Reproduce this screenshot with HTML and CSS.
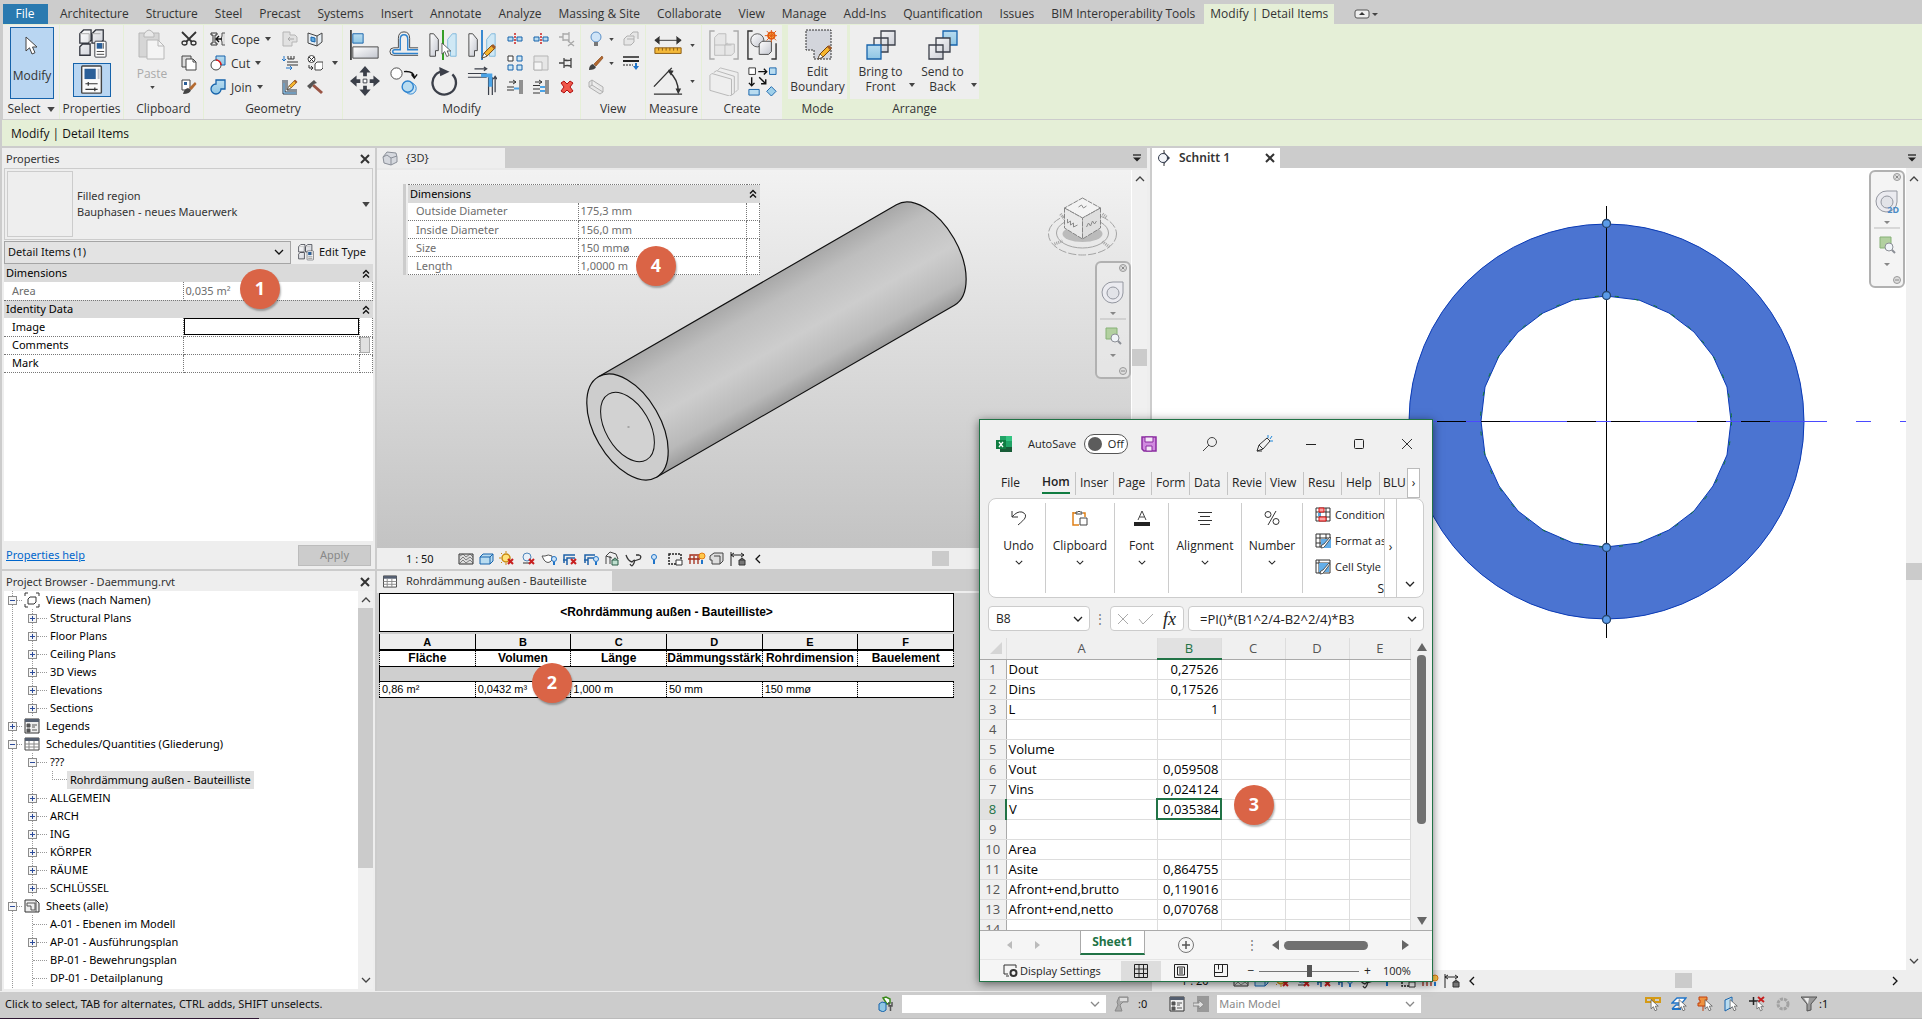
FILE: index.html
```html
<!DOCTYPE html>
<html lang="en">
<head>
<meta charset="utf-8">
<title>Modify | Detail Items</title>
<link rel="stylesheet" href="styles.css">
</head>
<body>
<svg class="defs" aria-hidden="true">
  <defs>
    <linearGradient id="steel" x1="0" y1="0" x2="1" y2="1"><stop offset="0" stop-color="#fff"/><stop offset="1" stop-color="#c3c6cf"/></linearGradient>
    <linearGradient id="sky" x1="0" y1="0" x2="0" y2="1"><stop offset="0" stop-color="#b9dcf0"/><stop offset="1" stop-color="#8fc6e4"/></linearGradient>
    <linearGradient id="pipe" x1="0" y1="0" x2="0" y2="1"><stop offset="0" stop-color="#a8a8a8"/><stop offset=".2" stop-color="#bebebe"/><stop offset=".55" stop-color="#cdcdcd"/><stop offset=".85" stop-color="#b9b9b9"/><stop offset="1" stop-color="#9c9c9c"/></linearGradient>
  </defs>
  <symbol id="caret" viewBox="0 0 6 4"><path d="M0 0h6L3 4z" fill="#444"/></symbol>
  <symbol id="chev" viewBox="0 0 10 6"><path d="M1 1l4 4 4-4" fill="none" stroke="currentColor" stroke-width="1.3"/></symbol>
  <symbol id="close" viewBox="0 0 10 10"><path d="M1 1l8 8M9 1l-8 8" stroke="#333" stroke-width="2"/></symbol>
  <symbol id="dbl" viewBox="0 0 8 8"><path d="M1 4l3-3 3 3M1 8l3-3 3 3" fill="none" stroke="#111" stroke-width="1.4"/></symbol>
  <symbol id="pencil" viewBox="0 0 16 16"><path d="M1 15l2-5L11 2l3 3-8 8z" fill="#f5b52e" stroke="#7a4308"/><path d="M1 15l2-5 3 3z" fill="#fff" stroke="#333" stroke-width=".6"/><path d="M10 3l2-2 3 3-2 2z" fill="#a05a28"/></symbol>
  <symbol id="arrow" viewBox="0 0 14 20"><path d="M1 1v14l3.500-3.200L7 18l3-1.300L7.500 11H12z" fill="#fff" stroke="#444"/></symbol>
  <symbol id="palette" viewBox="0 0 32 32"><path d="M3 5l4-4h8v11l-3 3H3zM16 5l4-4h8v11l-3 3h-9zM3 19l3-3h8v12H3z" fill="url(#steel)" stroke="#33363f" stroke-width="1.400"/><path d="M3 5h10v10M16 5h9" fill="none" stroke="#aaa"/><rect x="19" y="13" width="12" height="17" rx="1" fill="#fff" stroke="#33363f"/><path d="M21 15h6v6h-6z" fill="#2b5f98"/><path d="M21 24h8M21 27h8M28 15v6" stroke="#444"/></symbol>
  <symbol id="props" viewBox="0 0 24 32"><rect x="1" y="1" width="21" height="29" rx="1" fill="#fafafa" stroke="#444" stroke-width="1.500"/><path d="M4 4h12v11H4z" fill="#2b5f98"/><path d="M18 4h2v11h-2z" fill="#b9bcc4"/><path d="M5 20h13M8 18v4M5 26h13M15 24v4" stroke="#333" stroke-width="1.300"/></symbol>
  <symbol id="paste" viewBox="0 0 28 32"><path d="M1 4h20v24H1z" fill="#d6d6d6" stroke="#b8b8b8"/><path d="M6 5q5-8 10 0v3H6z" fill="#e9e9e9" stroke="#b8b8b8"/><path d="M9 11h11l6 6v13H9z" fill="#f4f4f4" stroke="#b8b8b8"/><path d="M20 11v6h6" fill="none" stroke="#b8b8b8"/></symbol>
  <symbol id="scissors" viewBox="0 0 16 16"><path d="M1 1l10 10M15 1L5 11" stroke="#333" stroke-width="1.800"/><ellipse cx="3.500" cy="12" rx="2.500" ry="2" fill="none" stroke="#333" stroke-width="1.300"/><ellipse cx="12.500" cy="12" rx="2.500" ry="2" fill="none" stroke="#333" stroke-width="1.300"/></symbol>
  <symbol id="copy" viewBox="0 0 16 16"><path d="M1 1h9v11H1z" fill="#ddd" stroke="#444"/><path d="M5 4h7l3 3v8H5z" fill="#fff" stroke="#444"/><path d="M12 4v3h3" fill="none" stroke="#444"/></symbol>
  <symbol id="match" viewBox="0 0 16 16"><path d="M1 1h8v10H1z" fill="#fff" stroke="#444"/><path d="M3 3h3v3H3z" fill="#2b5f98"/><path d="M2 15q1-5 5-6l3 2q-1 4-8 4z" fill="#444"/><path d="M8 9l6-6 1.500 2-5 6z" fill="#b46a30"/></symbol>
  <symbol id="cope" viewBox="0 0 16 16"><path d="M1 2h6v2H5v8h2v2H1v-2h2V4H1z" fill="#eee" stroke="#333"/><path d="M15 2h-3v3q-2 3 0 6v3h3" fill="#ddd" stroke="#555"/><path d="M12 8H6M9 5L6 8l3 3" fill="none" stroke="#111" stroke-width="1.400"/></symbol>
  <symbol id="cut" viewBox="0 0 16 16"><path d="M6 1h9v9H6z" fill="url(#sky)" stroke="#1663ab"/><circle cx="6" cy="10" r="5" fill="#fff" stroke="#444"/><path d="M6 5a5 5 0 015 5" fill="none" stroke="#e21b1b" stroke-width="1.500"/></symbol>
  <symbol id="join" viewBox="0 0 16 16"><path d="M6 1h9v9h-4a5 5 0 11-5-5z" fill="url(#sky)" stroke="#1663ab" stroke-width="1.300"/></symbol>
  <symbol id="conn" viewBox="0 0 16 16"><path d="M1 1h7v3h5l2 2v5h-5v4H1z" fill="#e1e1e1" stroke="#b5b5b5"/><path d="M12 8H6M8 6L6 8l2 2" stroke="#aaa" fill="none"/></symbol>
  <symbol id="wallj" viewBox="0 0 16 16"><path d="M2 1v5M0 4l2 2 2-2M4 13h6M8 11l2 2-2 2" fill="none" stroke="#1f74c8"/><path d="M6 1v3h6V1M9 1v3M5 7h11M5 10h11" fill="none" stroke="#333"/></symbol>
  <symbol id="wallpen" viewBox="0 0 16 16"><path d="M1 1v14h14M5 1v10h10M3 1v12h12" fill="none" stroke="#234" /><path d="M2 4v10h12" fill="none" stroke="#5aa7e0"/><use href="#pencil" x="5" y="0" width="11" height="11"/></symbol>
  <symbol id="facep" viewBox="0 0 16 16"><path d="M1 2l9 3v10l-9-3zM10 5l5-3v9l-5 4" fill="#e6edf3" stroke="#444"/><path d="M4 6l4 1v4l-4-1z" fill="#64aee0" stroke="#1663ab"/></symbol>
  <symbol id="split" viewBox="0 0 16 16"><circle cx="4.500" cy="4" r="3.500" fill="#fff" stroke="#444"/><path d="M2 2l5 5M7 2L2 7M2 10v3h4M4 11l2 2-2 2" fill="none" stroke="#333"/><path d="M8 9l2-2h6v6l-2 2H8z" fill="#fff" stroke="#444"/></symbol>
  <symbol id="hammer" viewBox="0 0 16 16"><path d="M6 6l9 8" stroke="#9a5545" stroke-width="3"/><path d="M0 7l7-6 3 3-3 1-4 5z" fill="#555"/></symbol>
  <symbol id="align" viewBox="0 0 32 32"><path d="M1 0v32" stroke="#111" stroke-width="1.500"/><path d="M3 4h11v10H3z" fill="url(#sky)" stroke="#1663ab"/><path d="M3 18h27v12H3z" fill="url(#steel)" stroke="#444"/></symbol>
  <symbol id="offset" viewBox="0 0 32 32"><path d="M31 27H5q-4 0-4-4t4-4h5V9q0-7 6-7t6 7v10h9" fill="none" stroke="#444"/><path d="M31 25H6q-2 0-2-2t2-2h6V10q0-5 4-5t4 5v11h11" fill="none" stroke="#2d83cf" stroke-width="1.500"/></symbol>
  <symbol id="mirror" viewBox="0 0 32 32"><path d="M2 4h4l5 6v12H8v6H2z" fill="url(#steel)" stroke="#444"/><path d="M30 4h-4l-5 6v12h3v6h6z" fill="#cfe8f5" stroke="#7fb9dc"/></symbol>
  <symbol id="move" viewBox="0 0 32 32"><path d="M16 0l6 7h-4v4h-4V7h-4zM16 32l6-7h-4v-4h-4v4h-4zM0 16l7-6v4h4v4H7v4zM32 16l-7-6v4h-4v4h4v4z" fill="#3b3f49"/><path d="M14 14h4v4h-4z" fill="#fff" stroke="#3b3f49"/></symbol>
  <symbol id="copy3" viewBox="0 0 32 32"><circle cx="8" cy="8" r="6" fill="#fff" stroke="#444"/><path d="M16 6q10-1 11 6M24 9l3 4 3-4" fill="none" stroke="#111" stroke-width="1.500"/><circle cx="23" cy="24" r="6" fill="#cde6f5" stroke="#2d83cf"/><circle cx="20" cy="22" r="6" fill="#b9dcf0" stroke="#2d83cf" stroke-width="1.500"/></symbol>
  <symbol id="rotate" viewBox="0 0 32 32"><path d="M18 5.500A12.500 12.500 0 1026 9" fill="none" stroke="#3b3f49" stroke-width="2.500"/><path d="M12 1l11 5-10 5z" fill="#3b3f49"/></symbol>
  <symbol id="trim" viewBox="0 0 32 32"><path d="M8 3h13M18 1l3 2-3 2M1 8h20M1 12h20M23 31V12M27 31V12M30 28V11M28 14l2-3 2 3" fill="none" stroke="#3b3f49" stroke-width="1.300"/><path d="M15 10h10v12" fill="none" stroke="#4ba3e6" stroke-width="4"/></symbol>
  <symbol id="spl" viewBox="0 0 16 16"><path d="M1 6h5v4H1zM10 6h5v4h-5z" fill="#b9dcf0" stroke="#1663ab"/><path d="M8 2v12" stroke="#c22" stroke-width="1.500" stroke-dasharray="2 1"/></symbol>
  <symbol id="unpin" viewBox="0 0 16 16"><path d="M0 6h4M4 2v8M4 3h6v6H4M10 1v10M9 10l6 5M15 10l-6 5" fill="none" stroke="#aaa" stroke-width="1.300"/></symbol>
  <symbol id="array" viewBox="0 0 16 16"><path d="M1 1h5v5H1z" fill="#fff" stroke="#333"/><path d="M10 1h5v5h-5zM1 10h5v5H1zM10 10h5v5h-5z" fill="#cfe8f5" stroke="#1663ab"/></symbol>
  <symbol id="scale" viewBox="0 0 16 16"><path d="M1 1h14v14H1z" fill="#e6e6e6" stroke="#b5b5b5"/><path d="M1 7h8v8H1z" fill="#f5f5f5" stroke="#b5b5b5"/></symbol>
  <symbol id="pin" viewBox="0 0 16 16"><path d="M0 8h5M5 3v10M5 5q4 1 7 0v6q-4-1-7 0M12 3v10" fill="#eee" stroke="#444" stroke-width="1.300"/></symbol>
  <symbol id="ext" viewBox="0 0 16 16"><path d="M2 3h7M6 1l3 2-3 2M0 8h7M0 11h7M13 1v14M15 1v14" fill="none" stroke="#333"/><path d="M7 9.500h5" stroke="#4ba3e6" stroke-width="2"/></symbol>
  <symbol id="ext2" viewBox="0 0 16 16"><path d="M2 3h7M6 1l3 2-3 2M0 6.500h7M0 10h7M0 14h7M13 1v14M15 1v14" fill="none" stroke="#333"/><path d="M7 8h5M7 12h5" stroke="#4ba3e6" stroke-width="2"/></symbol>
  <symbol id="del" viewBox="0 0 16 16"><path d="M2 4l3-2 3 3 3-3 3 2-3 4 3 4-3 2-3-3-3 3-3-2 3-4z" fill="#f0564a" stroke="#b01010"/></symbol>
  <symbol id="bulb" viewBox="0 0 16 16"><circle cx="8" cy="6" r="5" fill="#cfe4f7" stroke="#5b90c8"/><path d="M6 11h4v4H6z" fill="#777"/></symbol>
  <symbol id="gbox" viewBox="0 0 16 16"><path d="M1 8l3-3h7v6l-3 3H1zM4 8h7M7 4l3-3h5v7" fill="#e6e6e6" stroke="#b0b0b0"/></symbol>
  <symbol id="brush" viewBox="0 0 16 16"><path d="M1 15q0-5 4-6l3 3q-1 3-7 3z" fill="#444"/><path d="M6 9l8-8 1 2-7 8z" fill="#b46a30" stroke="#8a4a1c" stroke-width=".7"/></symbol>
  <symbol id="lw" viewBox="0 0 16 16"><path d="M0 2h16" stroke="#222" stroke-width="1.500"/><path d="M0 6h16" stroke="#222" stroke-width="2"/><path d="M0 10h10" stroke="#222" stroke-dasharray="2 1"/><path d="M12 8h2v3h2l-3 4-3-4h2z" fill="#1f74c8"/></symbol>
  <symbol id="beam" viewBox="0 0 16 16"><path d="M1 3l3-2 11 7v5l-3 2-11-7zM4 1v5l11 7M1 8l3-2" fill="#e6e6e6" stroke="#b0b0b0"/></symbol>
  <symbol id="ruler" viewBox="0 0 32 32"><path d="M2 11h28M7 7l-5 4 5 4M25 7l5 4-5 4" fill="#333" stroke="#333"/><path d="M2 19h28v6H2z" fill="#f4b93a" stroke="#8a5a10"/><path d="M6 19v3M10 19v3M14 19v3M18 19v3M22 19v3M26 19v3" stroke="#8a5a10"/></symbol>
  <symbol id="angle" viewBox="0 0 32 32"><path d="M1 30h30M1 22L20 2M17 6q10 8 10 22" fill="none" stroke="#333" stroke-width="1.500"/><path d="M16 4l6 1-3 5zM24 24h6l-3 6z" fill="#333"/></symbol>
  <symbol id="grp" viewBox="0 0 32 32"><path d="M6 1H1v30h5M26 1h5v30h-5" fill="none" stroke="#aaa" stroke-width="1.500"/><path d="M6 8l4-4h8v11h9v9l-3 3H6zM6 16h11v11M17 16l3-2M17 16h7" fill="#e6e6e6" stroke="#bbb"/></symbol>
  <symbol id="grpn" viewBox="0 0 32 32"><path d="M6 1H1v30h5M26 31h5V14" fill="none" stroke="#333" stroke-width="1.500"/><circle cx="11" cy="11" r="7" fill="url(#steel)" stroke="#555"/><path d="M13 15l3-3h10v11l-3 3H13z" fill="url(#steel)" stroke="#444"/><circle cx="26" cy="6" r="3.500" fill="#ffd65a" stroke="#e25a12" stroke-width="2"/><path d="M26-1v14M19 6h14M21 1l10 10M31 1L21 11" stroke="#e25a12"/></symbol>
  <symbol id="asm" viewBox="0 0 32 32"><path d="M9 5l3-3 19 5v18l-3 3" fill="#eee" stroke="#bbb"/><path d="M5 7l3-2 19 6v18l-3 2M1 10l2-2 21 6v17l-2 1L1 26z" fill="#eee" stroke="#b5b5b5"/></symbol>
  <symbol id="similar" viewBox="0 0 32 32"><path d="M2 2h7v7H2z" fill="#fff" stroke="#333"/><path d="M24 2h7v7h-7zM2 25h11v6H2z" fill="#b9dcf0" stroke="#1663ab"/><path d="M26 22l5 5-5 5-5-5z" fill="#9fd0ea" stroke="#1663ab"/><path d="M12 6h9M18 3l3 3-3 3M5 12v9M2 18l3 3 3-3M13 12l7 7M20 14v5h-5" fill="none" stroke="#111" stroke-width="1.500"/></symbol>
  <symbol id="bound" viewBox="0 0 32 32"><path d="M4 1h25v29H12v-9H4z" fill="#d3d5dc" stroke="#333" stroke-dasharray="2 1"/><use href="#pencil" x="15" y="15" width="16" height="16"/></symbol>
  <symbol id="front" viewBox="0 0 32 32"><path d="M16 2h14v14H16zM9 9h14v14H9z" fill="url(#steel)" stroke="#3b3f49" stroke-width="1.300"/><path d="M2 16h14v14H2z" fill="url(#sky)" stroke="#1663ab" stroke-width="1.300"/></symbol>
  <symbol id="back" viewBox="0 0 32 32"><path d="M16 2h14v14H16z" fill="url(#sky)" stroke="#1663ab" stroke-width="1.300"/><path d="M9 9h14v14H9zM2 16h14v14H2z" fill="url(#steel)" stroke="#3b3f49" stroke-width="1.300"/></symbol>
  <symbol id="sched" viewBox="0 0 16 14"><path d="M1 1h14v12H1z" fill="#fff" stroke="#444"/><path d="M1 1h14v3H1z" fill="#555f70"/><path d="M1 7h14M1 10h14M5 4v9M10 4v9" stroke="#888"/></symbol>
  <symbol id="viewset" viewBox="0 0 16 16"><path d="M4 1H1v3M12 1h3v3M1 12v3h3M15 12v3h-3M4 7l2-2h6v5l-2 2H4z" fill="none" stroke="#333"/></symbol>
  <symbol id="legend" viewBox="0 0 16 16"><path d="M1 1h14v14H1z" fill="#eee" stroke="#333"/><path d="M1 1h14v3H1z" fill="#555f70"/><path d="M3 6h3v3H3zM3 11h3v3H3zM8 7h5M8 9h3M8 12h5" fill="#555" stroke="#555"/></symbol>
  <symbol id="sheet" viewBox="0 0 16 14"><path d="M1 1h11l3 3v9H1z" fill="#eee" stroke="#333"/><path d="M3 4h8v7H7V7H3zM12 1v12" fill="none" stroke="#555"/></symbol>
  <symbol id="house" viewBox="0 0 16 16"><path d="M1 7l4-5 9 1 1 4v5l-6 3-7-2z" fill="#d5d8de" stroke="#8a8f98"/><path d="M1 7l4-2 4 3v7M9 8l6-2" fill="none" stroke="#8a8f98"/></symbol>
  <symbol id="plus" viewBox="0 0 9 9"><rect x=".5" y=".5" width="8" height="8" fill="#f6f6f6" stroke="#8c8c8c"/><path d="M2 4.500h5M4.500 2v5" stroke="#2b4b9b"/></symbol>
  <symbol id="minus" viewBox="0 0 9 9"><rect x=".5" y=".5" width="8" height="8" fill="#f6f6f6" stroke="#8c8c8c"/><path d="M2 4.500h5" stroke="#2b4b9b"/></symbol>
  <symbol id="tabmenu" viewBox="0 0 8 8"><path d="M0 1h8" stroke="#222" stroke-width="1.300"/><path d="M0 3.500h8L4 7.500z" fill="#222"/></symbol>
  <symbol id="vcbar" viewBox="0 0 290 16">
    <path d="M1 3h14v10H1z" fill="#ddd" stroke="#333"/><path d="M2 5l3-2 3 3 4-3 3 3M2 9l3-3 3 3 4-3 3 3M2 12l3-3 3 3 4-3 3 3" fill="none" stroke="#555" stroke-width=".7"/>
    <path d="M22 6l3-3h10v7l-3 3H22zM22 6h10v7M32 6l3-3" fill="#b9dcf0" stroke="#1663ab"/>
    <circle cx="48" cy="7" r="4" fill="#ffe27a" stroke="#c98a10" stroke-width="1.500"/><path d="M48 0v2M48 12v2M41 7h2M43 2l1 1M43 12l1-1" stroke="#c98a10"/><path d="M50 8l5 5M55 8l-5 5" stroke="#c71f1f" stroke-width="2"/>
    <circle cx="69" cy="6" r="4" fill="#e8f0f8" stroke="#4f86bb"/><path d="M65 12h7" stroke="#333"/><path d="M71 8l5 5M76 8l-5 5" stroke="#c71f1f" stroke-width="2"/>
    <path d="M84 5l2 4q4 5 8 0V5q-4-2-7 0z" fill="#fff" stroke="#555"/><circle cx="96" cy="8" r="2.500" fill="#cfe4f7" stroke="#1f74c8"/><path d="M96 11v3" stroke="#1f74c8" stroke-width="2"/>
    <path d="M106 12V4h11M109 14V7h8M105 9h4" fill="none" stroke="#1f62a8" stroke-width="1.500"/><path d="M113 8l5 5M118 8l-5 5" stroke="#c71f1f" stroke-width="2"/>
    <path d="M127 12V4h10M130 14V7h6M126 9h4" fill="none" stroke="#1f62a8" stroke-width="1.500"/><circle cx="138" cy="8" r="2.500" fill="#cfe4f7" stroke="#1f74c8"/><path d="M138 11v3" stroke="#1f74c8" stroke-width="2"/>
    <path d="M148 13V5l4-4 6 2 2 5M152 5v8M148 5l6 2" fill="#eee" stroke="#444"/><path d="M154 9h6v5h-6zM155 9q2-4 4 0" fill="#bfe0d0" stroke="#2a5c46"/>
    <path d="M168 4q2 6 6 7M174 11q4-4 2 1t-4 1M176 10l6-2q2-3-1-4l-3 0" fill="none" stroke="#333" stroke-width="1.300"/>
    <circle cx="196" cy="6" r="2.500" fill="#cfe4f7" stroke="#1f74c8"/><path d="M196 9v4" stroke="#1f74c8" stroke-width="2"/>
    <path d="M211 3h12v10h-12z" fill="none" stroke="#222" stroke-width="1.500" stroke-dasharray="2 1"/><path d="M218 9h6v5h-6z" fill="#fff" stroke="#333"/>
    <path d="M232 13V4h11M236 13V5M240 13V5M230 8h12" fill="none" stroke="#a22c1a" stroke-width="1.300"/><circle cx="244" cy="5" r="3" fill="#ffc84a" stroke="#e27b12"/><path d="M244 9v4" stroke="#1f74c8" stroke-width="2"/>
    <path d="M252 5l4-3h9v8l-3 3h-8v-4h-2zM256 5h6v8" fill="#ddd" stroke="#444"/>
    <path d="M273 1v14M273 4h13M276 2l-3 2 3 2M283 2l3 2-3 2" fill="none" stroke="#222"/><path d="M281 9h6v5h-6zM282 9q2-4 4 0" fill="#777" stroke="#333"/>
  </symbol>
  <symbol id="nav" viewBox="0 0 36 118">
    <rect x="1" y="1" width="34" height="116" rx="5" fill="#ececec" fill-opacity=".6" stroke="#b1b1b1" stroke-width="2"/>
    <circle cx="28" cy="7" r="3.500" fill="#ddd" stroke="#999"/><path d="M26.500 5.500l3 3M29.500 5.500l-3 3" stroke="#888"/>
    <path d="M18 21h10v11a10.500 10.500 0 11-10-11z" fill="#ebebf0" stroke="#9497a0"/><circle cx="18" cy="32" r="6" fill="#e2e3e8" stroke="#9497a0"/>
    <path d="M15 51h6l-3 3zM15 93h6l-3 3z" fill="#888"/><path d="M5 58h26" stroke="#bbb"/>
    <path d="M11 67h11v11H11z" fill="#b2d0a0" stroke="#86b176"/><circle cx="20" cy="77" r="4" fill="#f0f4f8" stroke="#8c8f96"/><path d="M23 80l3 3" stroke="#8c8f96" stroke-width="2"/>
    <circle cx="28" cy="110" r="3.500" fill="#ddd" stroke="#999"/><path d="M26 110h4" stroke="#888"/>
  </symbol>
</svg>

<nav class="tabs" aria-label="Ribbon tabs">
  <button class="file">File</button>
  <button>Architecture</button><button>Structure</button><button>Steel</button><button>Precast</button><button>Systems</button><button>Insert</button><button>Annotate</button><button>Analyze</button><button>Massing &amp; Site</button><button>Collaborate</button><button>View</button><button>Manage</button><button>Add-Ins</button><button>Quantification</button><button>Issues</button><button>BIM Interoperability Tools</button>
  <button class="current">Modify | Detail Items</button>
  <button aria-label="Minimize ribbon"><svg width="24" height="10" viewBox="0 0 24 10"><rect x="1" y="1" width="14" height="8" rx="2" fill="#eee" stroke="#555"/><path d="M5 6h6L8 3z" fill="#333"/><path d="M18 4h6l-3 3z" fill="#444"/></svg></button>
</nav>

<header class="ribbon">
  <section class="panel p-select">
    <div class="tools"><button class="big on"><svg width="14" height="20"><use href="#arrow"/></svg><span>Modify</span></button></div>
    <h2>Select <svg width="8" height="5"><use href="#caret"/></svg></h2>
  </section>
  <section class="panel p-props">
    <div class="tools stack"><button aria-label="Type properties"><svg width="30" height="30"><use href="#palette"/></svg></button><button class="on" aria-label="Properties"><svg width="24" height="30"><use href="#props"/></svg></button></div>
    <h2>Properties</h2>
  </section>
  <section class="panel p-clip">
    <div class="tools">
      <button class="big off"><svg width="28" height="32"><use href="#paste"/></svg><span>Paste</span><svg width="5" height="3"><use href="#caret"/></svg></button>
      <div class="small one"><svg><use href="#scissors"/></svg><svg><use href="#copy"/></svg><svg><use href="#match"/></svg></div>
    </div>
    <h2>Clipboard</h2>
  </section>
  <section class="panel p-geo">
    <div class="tools">
      <div class="lines">
        <button><svg class="ic"><use href="#cope"/></svg>Cope <svg class="ct"><use href="#caret"/></svg></button>
        <button><svg class="ic"><use href="#cut"/></svg>Cut <svg class="ct"><use href="#caret"/></svg></button>
        <button><svg class="ic"><use href="#join"/></svg>Join <svg class="ct"><use href="#caret"/></svg></button>
      </div>
      <div class="small one"><svg><use href="#conn"/></svg><svg><use href="#wallj"/></svg><svg><use href="#wallpen"/></svg></div>
      <div class="small one"><svg><use href="#facep"/></svg><svg><use href="#split"/></svg><svg><use href="#hammer"/></svg></div>
      <svg class="ct"><use href="#caret"/></svg>
    </div>
    <h2>Geometry</h2>
  </section>
  <section class="panel p-mod">
    <div class="tools">
      <div class="large four">
        <svg><use href="#align"/></svg><svg><use href="#offset"/></svg>
        <svg viewBox="0 0 32 32"><use href="#mirror"/><path d="M16 0v32" stroke="#2a9a1a" stroke-width="2"/><use href="#arrow" x="13" y="13" width="14" height="17"/></svg>
        <svg viewBox="0 0 32 32"><use href="#mirror"/><path d="M16 0v32" stroke="#2d83cf" stroke-width="2"/><use href="#pencil" x="15" y="14" width="17" height="17"/></svg>
        <svg><use href="#move"/></svg><svg><use href="#copy3"/></svg><svg><use href="#rotate"/></svg><svg><use href="#trim"/></svg>
      </div>
      <div class="small three">
        <svg><use href="#spl"/></svg><svg><use href="#spl"/></svg><svg><use href="#unpin"/></svg>
        <svg><use href="#array"/></svg><svg><use href="#scale"/></svg><svg><use href="#pin"/></svg>
        <svg><use href="#ext"/></svg><svg><use href="#ext2"/></svg><svg><use href="#del"/></svg>
      </div>
    </div>
    <h2>Modify</h2>
  </section>
  <section class="panel p-view">
    <div class="tools">
      <div class="small drop"><svg><use href="#bulb"/></svg><svg class="ct"><use href="#caret"/></svg><svg><use href="#gbox"/></svg>
      <svg><use href="#brush"/></svg><svg class="ct"><use href="#caret"/></svg><svg><use href="#lw"/></svg>
      <svg><use href="#beam"/></svg></div>
    </div>
    <h2>View</h2>
  </section>
  <section class="panel p-meas">
    <div class="tools"><div class="large meas"><svg><use href="#ruler"/></svg><svg class="ct"><use href="#caret"/></svg><svg><use href="#angle"/></svg><svg class="ct"><use href="#caret"/></svg></div></div>
    <h2>Measure</h2>
  </section>
  <section class="panel p-create">
    <div class="tools"><div class="large two"><svg><use href="#grp"/></svg><svg><use href="#grpn"/></svg><svg><use href="#asm"/></svg><svg><use href="#similar"/></svg></div></div>
    <h2>Create</h2>
  </section>
  <section class="panel ctx p-mode">
    <div class="tools"><button class="big"><svg width="32" height="32"><use href="#bound"/></svg><span>Edit<br>Boundary</span></button></div>
    <h2>Mode</h2>
  </section>
  <section class="panel ctx p-arr">
    <div class="tools">
      <button class="big"><svg width="32" height="32"><use href="#front"/></svg><span>Bring to<br>Front</span></button><svg class="ct"><use href="#caret"/></svg>
      <button class="big"><svg width="32" height="32"><use href="#back"/></svg><span>Send to<br>Back</span></button><svg class="ct"><use href="#caret"/></svg>
    </div>
    <h2>Arrange</h2>
  </section>
</header>
<div class="options">Modify | Detail Items</div>

<main class="work">
  <aside class="side">
    <section class="dock props">
      <h3>Properties <button aria-label="Close properties"><svg width="10" height="10"><use href="#close"/></svg></button></h3>
      <button class="type"><i class="thumb"></i><span>Filled region<br>Bauphasen - neues Mauerwerk</span><svg width="8" height="5"><use href="#caret"/></svg></button>
      <div class="filter">
        <div class="pick"><select aria-label="Element filter"><option>Detail Items (1)</option></select><svg width="10" height="6"><use href="#chev"/></svg></div>
        <button><svg width="17" height="17" viewBox="0 0 32 32"><use href="#palette"/></svg>Edit Type</button>
      </div>
      <div class="grid">
        <table class="pg">
          <colgroup><col class="k"><col><col class="e"></colgroup>
          <tbody>
          <tr class="sec"><th colspan="2">Dimensions</th><th><svg width="8" height="9"><use href="#dbl"/></svg></th></tr>
          <tr class="ro"><td>Area</td><td>0,035 m²</td><td></td></tr>
          <tr class="sec"><th colspan="2">Identity Data</th><th><svg width="8" height="9"><use href="#dbl"/></svg></th></tr>
          <tr><td><label for="img">Image</label></td><td class="edit"><input id="img" class="focus"></td><td></td></tr>
          <tr><td><label for="com">Comments</label></td><td class="edit"><input id="com"></td><td class="edit"><button class="more" aria-label="Browse comments"></button></td></tr>
          <tr><td><label for="mark">Mark</label></td><td class="edit"><input id="mark"></td><td></td></tr>
          </tbody>
        </table>
      </div>
      <footer><a href="#help">Properties help</a><button disabled>Apply</button></footer>
    </section>
    <section class="dock browser">
      <h3>Project Browser - Daemmung.rvt <button aria-label="Close browser"><svg width="10" height="10"><use href="#close"/></svg></button></h3>
      <div class="treebox">
        <ul class="tree">
          <li><div><svg class="t"><use href="#minus"/></svg><i></i><svg class="n"><use href="#viewset"/></svg>Views (nach Namen)</div>
            <ul>
              <li><div><svg class="t"><use href="#plus"/></svg><i></i>Structural Plans</div></li>
              <li><div><svg class="t"><use href="#plus"/></svg><i></i>Floor Plans</div></li>
              <li><div><svg class="t"><use href="#plus"/></svg><i></i>Ceiling Plans</div></li>
              <li><div><svg class="t"><use href="#plus"/></svg><i></i>3D Views</div></li>
              <li><div><svg class="t"><use href="#plus"/></svg><i></i>Elevations</div></li>
              <li><div><svg class="t"><use href="#plus"/></svg><i></i>Sections</div></li>
            </ul></li>
          <li><div><svg class="t"><use href="#plus"/></svg><i></i><svg class="n"><use href="#legend"/></svg>Legends</div></li>
          <li><div><svg class="t"><use href="#minus"/></svg><i></i><svg class="n"><use href="#sched"/></svg>Schedules/Quantities (Gliederung)</div>
            <ul>
              <li><div><svg class="t"><use href="#minus"/></svg><i></i>???</div>
                <div class="leaf"><i></i><mark>Rohrdämmung außen - Bauteilliste</mark></div></li>
              <li><div><svg class="t"><use href="#plus"/></svg><i></i>ALLGEMEIN</div></li>
              <li><div><svg class="t"><use href="#plus"/></svg><i></i>ARCH</div></li>
              <li><div><svg class="t"><use href="#plus"/></svg><i></i>ING</div></li>
              <li><div><svg class="t"><use href="#plus"/></svg><i></i>KÖRPER</div></li>
              <li><div><svg class="t"><use href="#plus"/></svg><i></i>RÄUME</div></li>
              <li><div><svg class="t"><use href="#plus"/></svg><i></i>SCHLÜSSEL</div></li>
            </ul></li>
          <li><div><svg class="t"><use href="#minus"/></svg><i></i><svg class="n"><use href="#sheet"/></svg>Sheets (alle)</div>
            <ul>
              <li><div class="bare"><i></i>A-01 - Ebenen im Modell</div></li>
              <li><div><svg class="t"><use href="#plus"/></svg><i></i>AP-01 - Ausführungsplan</div></li>
              <li><div class="bare"><i></i>BP-01 - Bewehrungsplan</div></li>
              <li><div class="bare"><i></i>DP-01 - Detailplanung</div></li>
            </ul></li>
        </ul>
        <div class="vs tall"><svg class="up" width="10" height="6"><use href="#chev"/></svg><b></b><svg width="10" height="6"><use href="#chev"/></svg></div>
      </div>
    </section>
  </aside>

  <div class="mid">
    <section class="view model">
      <div class="vtabs"><button><svg width="16" height="16"><use href="#house"/></svg>{3D}</button><svg width="8" height="8"><use href="#tabmenu"/></svg></div>
      <div class="stage">
        <div class="canvas">
          <svg class="scene" viewBox="377 170 755 378" preserveAspectRatio="xMidYMin slice">
            <g transform="rotate(-30 628 427)" stroke="#111"><path d="M628 369H972A33 58 0 01972 485H628z" fill="url(#pipe)" stroke-width="1.200"/>
            <ellipse cx="628" cy="427" rx="33" ry="58" fill="#cdcdcd" stroke-width="1.200"/><ellipse cx="628" cy="427" rx="22" ry="38" fill="#d2d2d2"/></g>
            <path d="M628 427h2" stroke="#777"/>
            <g fill="none" stroke="#a4a4a4"><ellipse cx="1083" cy="234" rx="34" ry="21" stroke-dasharray="8 2"/><ellipse cx="1083" cy="233" rx="26" ry="15"/><path d="M1055 244l8-3M1110 247l-8-6M1061 214l4 5M1103 214l4 3" stroke-width="3" stroke-dasharray="1 1"/></g>
            <ellipse cx="1083" cy="234" rx="20" ry="8" fill="#bbb"/>
            <g stroke="#858585" stroke-dasharray="5 1"><path d="M1083 198l18 10-18 10-18-10z" fill="#f3f3f3"/><path d="M1065 208l18 10v21l-18-11z" fill="#e9e9e9"/><path d="M1101 208l-18 10v21l18-11z" fill="#dedede"/></g>
            <path d="M1079 207l3-2 2 3 3-2M1068 219v4l3-2v4l3-2v4l4-2M1087 227l2-4 2 3 2-5 2 3 2-3" fill="none" stroke="#8b8b8b"/>
          </svg>
          <svg class="navbar" width="36" height="118"><use href="#nav"/></svg>
          <div class="dims"><table class="pg">
            <colgroup><col class="k"><col><col class="e"></colgroup>
            <tbody>
            <tr class="sec"><th colspan="2">Dimensions</th><th><svg width="8" height="9"><use href="#dbl"/></svg></th></tr>
            <tr class="ro"><td>Outside Diameter</td><td>175,3 mm</td><td></td></tr>
            <tr class="ro"><td>Inside Diameter</td><td>156,0 mm</td><td></td></tr>
            <tr class="ro"><td>Size</td><td>150 mmø</td><td></td></tr>
            <tr class="ro"><td>Length</td><td>1,0000 m</td><td></td></tr>
            </tbody>
          </table></div>
        </div>
        <div class="vs half"><svg class="up" width="10" height="6"><use href="#chev"/></svg><b></b><svg width="10" height="6"><use href="#chev"/></svg></div>
      </div>
      <div class="vbar"><span>1 : 50</span><svg width="290" height="16"><use href="#vcbar"/></svg><svg class="lt" width="10" height="6"><use href="#chev"/></svg><div class="hs"><b></b></div></div>
    </section>
    <section class="view schedule">
      <div class="vtabs"><button><svg width="16" height="13"><use href="#sched"/></svg>Rohrdämmung außen - Bauteilliste</button></div>
      <div class="sheetarea">
        <table class="sch">
          <caption>&lt;Rohrdämmung außen - Bauteilliste&gt;</caption>
          <thead>
            <tr class="let"><th>A</th><th>B</th><th>C</th><th>D</th><th>E</th><th>F</th></tr>
            <tr class="nam"><th>Fläche</th><th>Volumen</th><th>Länge</th><th>Dämmungsstärk</th><th>Rohrdimension</th><th>Bauelement</th></tr>
          </thead>
          <tbody>
            <tr class="gap"><td colspan="6"></td></tr>
            <tr class="dat"><td>0,86 m²</td><td>0,0432 m³</td><td>1,000 m</td><td>50 mm</td><td>150 mmø</td><td></td></tr>
          </tbody>
        </table>
      </div>
    </section>
  </div>

  <section class="view section">
    <div class="vtabs"><button><svg width="14" height="16" viewBox="0 0 14 16"><path d="M7 0v16" stroke="#333"/><path d="M7 2l6 6-6 6z" fill="#333b4c"/><circle cx="6" cy="8" r="4.500" fill="#f2f4f8" stroke="#333b4c"/></svg>Schnitt 1</button><button class="x" aria-label="Close Schnitt 1"><svg width="10" height="10"><use href="#close"/></svg></button><svg width="8" height="8"><use href="#tabmenu"/></svg></div>
    <div class="stage">
      <div class="canvas">
        <svg class="scene" viewBox="1152 168 754 802" preserveAspectRatio="xMidYMin slice">
          <circle cx="1606.500" cy="421.500" r="197.500" fill="#4b74d1" stroke="#0a3ab5"/>
          <path id="bore" d="M1606 296L1639 300 1669 313 1694 332 1713 356 1727 387 1731 421 1727 455 1713 486 1694 511 1669 530 1639 543 1606 547 1573 543 1543 530 1518 511 1499 486 1485 455 1481 421 1485 387 1499 356 1518 332 1543 313 1573 300z" fill="#fff" stroke="#0a3ab5" stroke-linejoin="round"/>
          <circle cx="1606" cy="421.500" r="125.500" fill="none" stroke="#117a2c" stroke-dasharray="4 16"/>
          <path d="M1606.500 206v432" stroke="#000"/>
          <path d="M1434 421.500h393" stroke="#4a4aff"/><path d="M1437 421.500h29M1481 421.500h29M1567 421.500h29M1611 421.500h29M1697 421.500h29M1741 421.500h29" stroke="#000"/><path d="M1856 421.500h15M1900 421.500h6" stroke="#4a4aff"/>
          <g fill="#5b9be8" stroke="#26456f" stroke-width="1.300"><circle cx="1606.500" cy="223.500" r="4"/><circle cx="1606.500" cy="295.500" r="4"/><circle cx="1606.500" cy="547.500" r="4"/><circle cx="1606.500" cy="619.500" r="4"/></g>
        </svg>
        <div class="navbar"><svg width="36" height="118"><use href="#nav"/></svg><b>2D</b></div>
      </div>
      <div class="vs half"><svg class="up" width="10" height="6"><use href="#chev"/></svg><b></b><svg width="10" height="6"><use href="#chev"/></svg></div>
    </div>
    <div class="vbar"><span>1 : 20</span><svg width="82" height="16" viewBox="0 0 82 16"><use href="#vcbar" width="290" height="16"/></svg><svg width="42" height="16" viewBox="103 0 42 16"><use href="#vcbar" width="290" height="16"/></svg><svg width="85" height="16" viewBox="166 0 85 16"><use href="#vcbar" width="290" height="16"/></svg><svg width="20" height="16" viewBox="270 0 20 16"><use href="#vcbar" width="290" height="16"/></svg><svg class="lt" width="10" height="6"><use href="#chev"/></svg><div class="hs"><b></b></div><svg class="rt" width="10" height="6"><use href="#chev"/></svg></div>
  </section>
</main>

<footer class="status">
  <span class="hint">Click to select, TAB for alternates, CTRL adds, SHIFT unselects.</span>
  <div class="sets">
    <svg width="16" height="16" viewBox="0 0 16 16"><path d="M5 2l3-1 4 2v4L9 8z" fill="#fff" stroke="#3a8a1a" stroke-width="1.500"/><path d="M1 8l3-2 4 1v7l-3 2-4-2z" fill="#8fc6e4" stroke="#1663ab"/><path d="M11 6v4h3V6M12.500 9v6" fill="none" stroke="#555" stroke-width="1.500"/></svg>
    <div class="pick"><select aria-label="Active workset"><option></option></select><svg width="10" height="6"><use href="#chev"/></svg></div>
    <svg width="16" height="16" viewBox="0 0 16 16"><path d="M5 1h9v5H9l-3 3 2 6H1l3-6-1-3z" fill="#aaa" stroke="#888"/><path d="M6 2h7v3H6z" fill="#ddd"/></svg>
    <span>:0</span>
    <svg class="opt" width="16" height="16"><use href="#legend"/></svg>
    <svg width="16" height="16" viewBox="0 0 16 16"><path d="M4 0h12v16H4z" fill="#999"/><path d="M0 7h6V4l5 4.500L6 13v-3H0z" fill="#ddd" stroke="#888"/></svg>
    <div class="pick"><select aria-label="Design option"><option>Main Model</option></select><svg width="10" height="6"><use href="#chev"/></svg></div>
  </div>
  <div class="picks">
    <svg viewBox="0 0 16 16"><path d="M1 2h6v4H1zM9 2h6v4H9zM6 4h4" fill="none" stroke="#d49a16" stroke-width="2"/><use href="#arrow" x="5" y="3" width="10" height="13"/></svg>
    <svg viewBox="0 0 16 16"><path d="M1 7l5-5h9l-4 5zM1 13l4-4h8" fill="#fff" stroke="#1f74c8" stroke-width="1.300"/><path d="M1 13h9" stroke="#1f74c8" stroke-width="2"/><use href="#arrow" x="7" y="3" width="10" height="13"/></svg>
    <svg viewBox="0 0 16 16"><path d="M2 1h8v3H9v3h2v3H1V7h2V4H2zM6 10v5" fill="#ee9240" stroke="#c2410c"/><use href="#arrow" x="7" y="3" width="10" height="13"/></svg>
    <svg viewBox="0 0 16 16"><path d="M2 4l7-3v10l-7 4z" fill="#b9dcf0" stroke="#1663ab"/><use href="#arrow" x="6" y="3" width="10" height="13"/></svg>
    <svg viewBox="0 0 16 16"><path d="M0 5h9M4.500 1v8" stroke="#222" stroke-width="1.500"/><path d="M9 1l6 5M15 1L9 6" stroke="#c71f1f" stroke-width="2"/><use href="#arrow" x="7" y="4" width="9" height="12"/></svg>
    <svg viewBox="0 0 16 16"><circle cx="8" cy="8" r="5" fill="none" stroke="#a2a2a2" stroke-width="3" stroke-dasharray="3 1"/></svg>
    <svg viewBox="0 0 16 16"><path d="M0 1h16l-6 7v6l-4 1V8z" fill="#9a9a9a" stroke="#555"/><path d="M3 2h5L7 8z" fill="#eee"/></svg>
    <span>:1</span>
  </div>
</footer>

<section class="excel" aria-label="Workbook">
  <div class="xtitle">
    <svg width="16" height="16" viewBox="0 0 16 16"><path d="M4 0h12v16H4z" fill="#21a366"/><path d="M10 0h6v5h-6z" fill="#33c481"/><path d="M4 5h6v6H4z" fill="#107c41"/><path d="M4 11h12v5H4z" fill="#185c37"/><path d="M0 4h10v9H0z" fill="#107c41"/><path d="M3 6l4 5M7 6l-4 5" stroke="#fff" stroke-width="1.300"/></svg>
    <label for="autosave">AutoSave</label>
    <span class="toggle"><input type="checkbox" id="autosave"><span>Off</span></span>
    <svg class="save" width="16" height="16" viewBox="0 0 16 16"><path d="M1 1h14v14H3l-2-2z" fill="#d18be0" stroke="#8a2da0" stroke-width="1.500"/><path d="M4 1h8v5H4zM5 10h6v5H5z" fill="#f3e6f6" stroke="#8a2da0"/></svg>
    <svg class="find" width="16" height="16" viewBox="0 0 16 16"><circle cx="10" cy="6" r="4.500" fill="none" stroke="#444"/><path d="M7 9l-6 6" stroke="#444"/></svg>
    <svg class="pen" width="18" height="18" viewBox="0 0 18 18"><path d="M2 16l2-6 8-7 3 3-7 8zM4 10l4 4M2 16h5" fill="none" stroke="#333"/><path d="M13 3V0M15 4l2-3M15 6h3" stroke="#1f86d8"/></svg>
    <button aria-label="Minimize"><svg width="12" height="12"><path d="M1 6.500h10" stroke="#222"/></svg></button>
    <button aria-label="Maximize"><svg width="12" height="12"><rect x="1.500" y="1.500" width="9" height="9" rx="1" fill="none" stroke="#222"/></svg></button>
    <button aria-label="Close workbook"><svg width="12" height="12"><path d="M1 1l10 10M11 1L1 11" stroke="#333"/></svg></button>
  </div>
  <div class="xtabs"><button class="f">File</button><button class="cur"><span>Hom</span></button><button>Inser</button><button>Page</button><button>Form</button><button>Data</button><button>Revie</button><button>View</button><button>Resu</button><button>Help</button><button>BLU</button><button class="more" aria-label="More tabs">›</button></div>
  <div class="xrib">
    <button class="g1"><svg viewBox="0 0 16 16"><path d="M1 1v6h6M1 7q5-6 10-5 5 2 3 6-1 2-7 7" fill="none" stroke="#333"/></svg>Undo<svg class="cv"><use href="#chev"/></svg></button>
    <button class="g2"><svg viewBox="0 0 16 16"><path d="M1 3h3M11 3h2v4M1 2v13h6" fill="none" stroke="#e08017" stroke-width="1.500"/><path d="M4 4V2h2q1-2 2 0h2v2zM8 8h7v7H8z" fill="#fff" stroke="#444"/></svg>Clipboard<svg class="cv"><use href="#chev"/></svg></button>
    <button class="g3"><svg viewBox="0 0 16 16"><path d="M4 10L8 1l4 9M5.500 7h5" fill="none" stroke="#444"/><path d="M0 12h16v4H0z" fill="#222"/></svg>Font<svg class="cv"><use href="#chev"/></svg></button>
    <button class="g4"><svg viewBox="0 0 16 16"><path d="M1 2.500h14M3 6.500h10M1 10.500h14M3 14.500h10" stroke="#333"/></svg>Alignment<svg class="cv"><use href="#chev"/></svg></button>
    <button class="g5"><svg viewBox="0 0 16 16"><circle cx="4" cy="4.500" r="3" fill="none" stroke="#333"/><circle cx="12" cy="11.500" r="3" fill="none" stroke="#333"/><path d="M12 1L4 15" stroke="#333"/></svg>Number<svg class="cv"><use href="#chev"/></svg></button>
    <div class="styles">
      <button><svg viewBox="0 0 16 16"><path d="M1 1h14v13H1zM1 5h14M1 10h14M5 1v13M11 1v13" fill="#fff" stroke="#333"/><path d="M4 1h5v4H4zM4 10h7v4H4z" fill="#f9a1a1" stroke="#d11"/><path d="M3 6h3v3H3z" fill="#5aa7e0"/></svg>Condition</button>
      <button><svg viewBox="0 0 16 16"><path d="M1 1h14v13H1zM1 5h14M1 10h14M5 1v13M11 1v13" fill="#fff" stroke="#333"/><path d="M6 6h10v9H6z" fill="#64aee8"/><path d="M6 15q0-4 3-4l6-7 1 1-6 8q-1 2-4 2z" fill="#fff" stroke="#333" stroke-width=".8"/></svg>Format as</button>
      <button><svg viewBox="0 0 16 16"><path d="M1 1h14v13H1zM1 4h14M4 1v13" fill="#fff" stroke="#333"/><path d="M4 4h10v9H4z" fill="#64aee8"/><path d="M5 15q0-4 3-4l6-7 1 1-6 8q-1 2-4 2z" fill="#fff" stroke="#333" stroke-width=".8"/></svg>Cell Style</button>
      <span>S</span>
    </div>
    <button class="next" aria-label="More commands">›</button>
    <button class="fold" aria-label="Collapse ribbon"><svg width="10" height="6"><use href="#chev"/></svg></button>
  </div>
  <div class="xform">
    <div class="pick"><select aria-label="Name box"><option>B8</option></select><svg width="10" height="6"><use href="#chev"/></svg></div>
    <span class="dots">⋮</span>
    <div class="fx"><svg width="12" height="12"><path d="M1 1l10 10M11 1L1 11" stroke="#aaa"/></svg><svg width="16" height="12"><path d="M1 6l4 5L15 1" fill="none" stroke="#aaa"/></svg><em>fx</em></div>
    <div class="pick fm"><input aria-label="Formula" value="=PI()*(B1^2/4-B2^2/4)*B3"><svg width="10" height="6"><use href="#chev"/></svg></div>
  </div>
  <div class="xgrid">
    <table>
      <colgroup><col class="r"><col class="a"><col class="b"><col class="b"><col class="b"><col></colgroup>
      <thead><tr><th><svg width="12" height="12"><path d="M12 0v12H0z" fill="#d5d5d5"/></svg></th><th>A</th><th class="hot">B</th><th>C</th><th>D</th><th>E</th></tr></thead>
      <tbody>
        <tr><th>1</th><td>Dout</td><td>0,27526</td><td></td><td></td><td></td></tr>
        <tr><th>2</th><td>Dins</td><td>0,17526</td><td></td><td></td><td></td></tr>
        <tr><th>3</th><td>L</td><td>1</td><td></td><td></td><td></td></tr>
        <tr><th>4</th><td></td><td></td><td></td><td></td><td></td></tr>
        <tr><th>5</th><td>Volume</td><td></td><td></td><td></td><td></td></tr>
        <tr><th>6</th><td>Vout</td><td>0,059508</td><td></td><td></td><td></td></tr>
        <tr><th>7</th><td>Vins</td><td>0,024124</td><td></td><td></td><td></td></tr>
        <tr><th class="hot">8</th><td>V</td><td class="sel">0,035384</td><td></td><td></td><td></td></tr>
        <tr><th>9</th><td></td><td></td><td></td><td></td><td></td></tr>
        <tr><th>10</th><td>Area</td><td></td><td></td><td></td><td></td></tr>
        <tr><th>11</th><td>Asite</td><td>0,864755</td><td></td><td></td><td></td></tr>
        <tr><th>12</th><td>Afront+end,brutto</td><td>0,119016</td><td></td><td></td><td></td></tr>
        <tr><th>13</th><td>Afront+end,netto</td><td>0,070768</td><td></td><td></td><td></td></tr>
        <tr><th>14</th><td></td><td></td><td></td><td></td><td></td></tr>
      </tbody>
    </table>
    <div class="xvs"><svg width="10" height="8"><path d="M0 8h10L5 0z" fill="#666"/></svg><b></b><svg width="10" height="8"><path d="M0 0h10L5 8z" fill="#666"/></svg></div>
  </div>
  <div class="xsheets">
    <svg width="5" height="8"><path d="M5 0v8L0 4z" fill="#bbb"/></svg><svg width="5" height="8"><path d="M0 0v8l5-4z" fill="#bbb"/></svg>
    <button class="st">Sheet1</button>
    <svg class="add" width="16" height="16" viewBox="0 0 16 16"><circle cx="8" cy="8" r="7.500" fill="none" stroke="#777"/><path d="M4 8h8M8 4v8" stroke="#555" stroke-width="1.500"/></svg>
    <span class="dots">⋮</span>
    <svg class="l" width="7" height="10"><path d="M7 0v10L0 5z" fill="#666"/></svg><b></b><svg width="7" height="10"><path d="M0 0v10l7-5z" fill="#666"/></svg>
  </div>
  <div class="xstat">
    <button class="ds"><svg width="15" height="14" viewBox="0 0 15 14"><path d="M5 10H1V1h12v3M3 12h3" fill="none" stroke="#333"/><circle cx="10.500" cy="9" r="3" fill="none" stroke="#333" stroke-width="2"/></svg>Display Settings</button>
    <button class="on" aria-label="Normal view"><svg width="14" height="14"><path d="M.5.5h13v13H.5zM.5 5h13M.5 9.500h13M5 .5v13M9.500.5v13" fill="none" stroke="#222"/></svg></button>
    <button aria-label="Page layout"><svg width="14" height="14"><path d="M.5.5h13v13H.5zM3.500 3h7v8h-7zM5 5h4M5 7h4M5 9h4" fill="none" stroke="#222"/></svg></button>
    <button aria-label="Page breaks"><svg width="14" height="14"><path d="M.5.5h13v12H.5zM.5 8.500h8v-8M4.500.5v5" fill="none" stroke="#222"/></svg></button>
    <span class="zm">−</span><input type="range" aria-label="Zoom" min="0" max="200" value="100"><span>+</span><span class="pc">100%</span>
  </div>
</section>

<b class="badge b1">1</b><b class="badge b2">2</b><b class="badge b3">3</b><b class="badge b4">4</b>
</body>
</html>
```
FILE: styles.css
```css
* { box-sizing: border-box; }
body {
  margin: 0;
  min-height: 100vh;
  display: flex;
  flex-direction: column;
  position: relative;
  overflow: hidden;
  background: #ccc;
  color: #333;
  font: 11px/18px "Noto Sans", "Open Sans", sans-serif;
}
button, input, select { font: inherit; color: inherit; background: none; border: 0; padding: 0; margin: 0; border-radius: 0; min-width: 0; }
select { appearance: none; opacity: 1; }
h2, h3, ul { margin: 0; padding: 0; font-size: inherit; font-weight: inherit; list-style: none; }
svg { flex: none; display: block; }
table { border-collapse: collapse; }
.defs { position: absolute; width: 0; height: 0; }
.pick { display: grid; align-items: center; }
.pick > * { grid-area: 1 / 1; }
.pick > svg { justify-self: end; margin-right: 6px; pointer-events: none; }
.ct { width: 6px; height: 4px; }

/* Ribbon tabs */
.tabs { display: flex; height: 24px; padding: 4px 0 0 3px; font-family: "Open Sans", sans-serif; font-size: 12px; }
.tabs button { padding: 0 9px 0 8px; height: 20px; white-space: nowrap; }
.tabs .file { width: 45px; margin-right: 4px; background: #2a7ab0; color: #fff; }
.tabs .current { background: #e5efd7; margin-right: 12px; padding: 0 6px; }

/* Ribbon */
.ribbon { display: flex; height: 95px; margin-left: 3px; background: #e5efd7; font-family: "Open Sans", sans-serif; font-size: 12px; }
.panel { display: flex; flex-direction: column; background: #eee; border-right: 1px solid #e5efd7; border-top: 1px solid #e5efd7; }
.panel h2 { height: 20px; margin-top: auto; line-height: 18px; text-align: center; display: flex; justify-content: center; align-items: center; gap: 6px; }
.tools { display: flex; height: 74px; padding-top: 2px; line-height: 15px; }
.big { display: flex; flex-direction: column; align-items: center; gap: 3px; padding-top: 2px; line-height: 15px; }
.off { color: #aaa; }
.on { background: #b9d6f2; border: 1px solid #1663ab; }
.small { display: grid; grid-auto-rows: 24px; align-items: center; }
.small svg { width: 16px; height: 16px; }
.small .ct, .large .ct { width: 5px; height: 3px; }
.large { display: grid; grid-auto-rows: 36px; align-items: center; }
.large svg { width: 30px; height: 30px; }
.p-select { width: 57px; }
.p-select .big { width: 44px; height: 72px; margin-left: 7px; padding-top: 8px; gap: 12px; }
.p-props { width: 64px; }
.stack { flex-direction: column; align-items: center; gap: 4px; }
.stack button { padding-top: 2px; }
.stack .on { width: 38px; height: 34px; display: grid; place-items: center; padding: 0; }
.p-clip { width: 80px; }
.p-clip .tools { padding-left: 13px; gap: 14px; }
.p-clip .big { gap: 5px; width: 30px; }
.p-geo { width: 139px; }
.p-geo .tools { padding-left: 6px; }
.lines { width: 72px; display: grid; grid-auto-rows: 24px; }
.lines button { display: flex; align-items: center; gap: 5px; }
.ic { width: 16px; height: 16px; }
.p-geo .one { width: 25px; }
.p-geo .tools > .ct { align-self: center; }
.p-mod { width: 238px; }
.p-mod .tools { padding-left: 7px; }
.four { grid-template-columns: repeat(4, 39px); }
.three { grid-template-columns: repeat(3, 26px); padding-left: 1px; }
.p-view { width: 65px; }
.p-view .tools { padding-left: 7px; }
.drop { grid-template-columns: 21px 14px 16px; }
.p-meas { width: 56px; }
.p-meas .tools { padding-left: 7px; }
.meas { grid-template-columns: 37px 6px; }
.p-create { width: 81px; }
.p-create .tools { padding-left: 7px; }
.two { grid-template-columns: repeat(2, 38px); }
.ctx h2 { background: #e5efd7; }
.p-mode { width: 60px; margin-left: 5px; }
.p-mode .big { width: 60px; }
.p-arr { width: 130px; margin-left: 2px; }
.p-arr .tools { justify-content: center; }
.p-arr .big { width: 56px; }
.p-arr .ct { margin-top: 56px; }

.options { height: 26px; margin: 1px 0 2px 2px; padding: 0 9px; background: #e5efd7; color: #111; font-family: "Open Sans", sans-serif; font-size: 12px; line-height: 28px; }

/* Workspace */
.work { flex: 1; display: grid; grid-template-columns: 373px minmax(0, 773fr) minmax(0, 770fr); gap: 2px; padding-left: 2px; }
.side { display: grid; grid-template-rows: 421px minmax(0, 1fr); gap: 2px; }
.dock { background: #eee; padding: 0 2px; display: flex; flex-direction: column; min-height: 0; }
.dock h3 { display: flex; justify-content: space-between; align-items: center; height: 20px; padding: 2px 3px 0 2px; flex: none; }
.type { display: flex; align-items: center; height: 72px; padding: 2px; border: 1px solid #ccc; text-align: left; line-height: 16px; }
.thumb { width: 66px; height: 66px; border: 1px solid #ccc; margin-right: 4px; }
.type svg { margin-left: auto; }
.filter { display: flex; gap: 6px; height: 24px; align-items: center; color: #111; }
.filter .pick { width: 287px; height: 23px; border: 1px solid #a5a5a5; background: #e3e3e3; }
.filter select { height: 21px; padding-left: 3px; }
.filter button { display: flex; align-items: center; gap: 5px; }
.grid { flex: 1; background: #fff; }
.pg { width: 100%; table-layout: fixed; color: #000; background: #fff; }
.pg .k { width: 179px; }
.pg .e { width: 13px; }
.pg td, .pg th { height: 18px; padding: 0 2px; line-height: 16px; text-align: left; font-weight: 400; white-space: nowrap; }
.pg td { border: 1px dotted #777; border-left: 0; border-top: 0; }
.pg td:first-child { padding-left: 8px; }
.pg .edit { padding: 0; }
.pg input { display: block; width: 100%; height: 17px; }
.pg .focus { border: 1px solid #000; }
.pg .more { display: block; width: 10px; height: 16px; background: #e1e1e1; border: 1px solid #adadad; }
.sec { background: #dadada; }
.pg .ro { color: #6d6d6d; }
.dock footer { display: flex; justify-content: space-between; align-items: center; height: 28px; padding: 0 2px; }
.dock a { color: #0066cc; }
.dock footer button { width: 73px; height: 21px; background: #ccc; border: 1px solid #bcbcbc; color: #888; }
.treebox { flex: 1; display: flex; background: #fff; min-height: 0; margin-bottom: 2px; color: #000; }
.tree { flex: 1; overflow: hidden; }
.tree, .tree ul { background: repeating-linear-gradient(#999 0 1px, transparent 1px 2px) 8px 0 / 1px 100% no-repeat; }
.tree ul { margin-left: 20px; }
.tree div { display: flex; align-items: center; height: 18px; padding-left: 4px; white-space: nowrap; }
.t { width: 9px; height: 9px; }
.n { width: 16px; height: 16px; margin: 0 6px 0 2px; }
.tree i { width: 5px; border-top: 1px dotted #999; }
.tree ul i { width: 10px; margin-right: 3px; }
.tree .bare i { width: 14px; margin-left: 5px; }
.tree .leaf { padding-left: 28px; }
.tree .leaf i { width: 15px; height: 9px; align-self: start; margin: 0; border: dotted #999; border-width: 0 0 1px 1px; }
mark { padding: 0 3px; background: #e0e0e0; color: #000; }
.vs { width: 15px; flex: none; display: flex; flex-direction: column; align-items: center; padding: 6px 0; background: #f0f0f0; color: #444; }
.vs b { width: 100%; background: #cbcbcb; }
.vs svg:last-child { margin-top: auto; }
.up { transform: rotate(180deg); }
.tall b { height: 260px; margin-top: 5px; }

/* Views */
.mid { display: grid; grid-template-rows: 421px minmax(0, 1fr); gap: 2px; }
.view { display: flex; flex-direction: column; min-width: 0; min-height: 0; }
.vtabs { display: flex; align-items: center; height: 20px; }
.vtabs button { display: flex; align-items: center; height: 20px; padding: 0 0 0 5px; gap: 8px; width: 128px; background: #eee; white-space: nowrap; }
.vtabs > svg { margin: 0 6px 0 auto; }
.stage { flex: 1; display: flex; min-height: 0; }
.canvas { flex: 1; position: relative; overflow: hidden; }
.scene { position: absolute; inset: 0; width: 100%; height: 100%; }
.model { border-right: 3px solid #eee; }
.model .stage { border-top: 2px solid #e9e9e9; }
.model .canvas { background: linear-gradient(#f2f2f2, #c3c3c3); border-right: 1px solid #fff; }
.navbar { position: absolute; right: 0; top: 91px; }
.section .navbar { top: 2px; right: 1px; }
.section .navbar b { position: absolute; right: 6px; top: 34px; font-size: 9px; line-height: 12px; color: #4d8cc6; }
.half b { height: 17px; margin-top: 167px; }
.vbar { display: flex; align-items: center; height: 21px; background: #eee; color: #111; }
.vbar span { width: 81px; padding-left: 29px; white-space: nowrap; }
.lt { transform: rotate(90deg); margin-left: 5px; }
.rt { transform: rotate(-90deg); margin-right: 22px; }
.hs { flex: 1; height: 15px; padding-left: 169px; }
.hs b { display: block; width: 17px; height: 15px; background: #cbcbcb; }
.dims { position: absolute; left: 26px; top: 14px; width: 357px; border-left: 3px solid #ccc; padding-left: 2px; }
.dims .k { width: 170px; }
.dims .sec { border-top: 1px dotted #777; }
.schedule .vtabs button { width: 235px; }
.sheetarea { flex: 1; padding-left: 2px; background: #cfcfcf; border-top: 2px solid #eee; }
.sch { width: 575px; table-layout: fixed; color: #000; font: 11px/14px "Liberation Sans", Arial, sans-serif; }
.sch caption { height: 39px; background: #fff; border: 1px solid #000; margin-bottom: 2px; font-weight: 700; font-size: 12px; line-height: 37px; }
.sch th, .sch td { height: 16px; padding: 0 2px; overflow: hidden; white-space: nowrap; line-height: 14px; }
.let th { background: #eee; border: solid #000; border-width: 0 1px 2px; }
.nam th { background: #fff; border: 1px solid #000; border-left-style: dotted; border-right-style: dotted; font-size: 12px; }
.sch .nam th { padding: 0; }
.dat td { background: #fff; border: 1px solid #000; border-left-style: dotted; border-right-style: dotted; }
.sch .gap td { height: 15px; border: 0 solid #000; border-left-width: 1px; }
.section .vtabs button { background: #fff; font-weight: 600; font-size: 12px; width: 113px; }
.section .vtabs .x { width: 15px; padding: 0; }
.section .canvas { background: #fff; }
.section .half { width: 16px; padding-top: 8px; }
.section .half b { margin-top: 381px; }
.section .hs { padding-left: 198px; }

/* Status bar */
.status { display: flex; align-items: center; height: 28px; padding: 0 0 3px 5px; color: #111; background: linear-gradient(90deg, #2e1733 259px, #bbb 259px) 0 100% / 100% 1px no-repeat; border-top: 1px solid #eee; }
.hint { flex: 0 0 873px; }
.sets { display: flex; align-items: center; gap: 8px; }
.sets .pick { width: 204px; height: 18px; background: #fff; color: #888; }
.sets select { padding-left: 2px; height: 18px; }
.opt { margin-left: 14px; }
.picks { display: flex; align-items: center; gap: 10px; margin: 0 93px 0 auto; }
.picks svg { width: 16px; height: 16px; }
.picks span { margin-left: -8px; width: 10px; }

/* Spreadsheet window */
.excel { position: absolute; left: 979px; top: 419px; width: 454px; height: 563px; display: flex; flex-direction: column; background: #f0f0f0; border: 1px solid #217346; box-shadow: 0 2px 9px rgba(0, 0, 0, .55); color: #222; font-family: "Open Sans", sans-serif; font-size: 12px; }
.excel .pick { background: #fff; border: 1px solid #ccc; border-radius: 4px; height: 25px; }
.xtitle { display: flex; align-items: center; height: 48px; padding: 0 19px 0 16px; }
.xtitle label { margin: 0 6px 0 16px; width: 51px; font-size: 11px; }
.toggle { display: flex; align-items: center; gap: 6px; width: 45px; height: 20px; padding: 0 3px; border: 1px solid #555; border-radius: 10px; background: #fff; font-size: 11px; }
.toggle input { appearance: none; width: 14px; height: 14px; border-radius: 50%; background: #5c5c5c; }
.save { margin-left: 13px; }
.find { margin-left: 45px; }
.pen { margin: 0 32px 0 37px; }
.xtitle button { flex: none; width: 12px; margin-right: 36px; }
.xtitle button:last-child { margin: 0; }
.xtabs { display: flex; height: 30px; align-items: center; padding-left: 13px; }
.xtabs button { flex: none; width: 38px; height: 23px; padding-left: 4px; white-space: nowrap; text-align: left; border-right: 1px solid #c4c4c4; }
.xtabs .f { width: 45px; padding-left: 8px; border: 0; }
.xtabs .cur { font-weight: 600; }
.xtabs .cur span { display: block; width: 28px; border-bottom: 2px solid #107c41; line-height: 20px; }
.xtabs button:nth-last-child(2) { width: 27px; padding-left: 3px; border: 0; }
.xtabs .more { width: 13px; height: 30px; border: 1px solid #bbb; background: #fff; text-align: center; padding: 0; }
.xrib { display: flex; height: 100px; margin: 0 8px; background: #fff; border: 1px solid #ccc; border-radius: 8px; }
.xrib > button { display: flex; flex-direction: column; align-items: center; gap: 11px; margin: 4px 0; padding-top: 7px; border-right: 1px solid #ccc; }
.xrib > button > svg { width: 16px; height: 16px; }
.xrib > button .cv { width: 8px; height: 5px; margin-top: -6px; }
.xrib .g1 { width: 57px; padding-left: 3px; }
.g2 { width: 69px; }
.g3 { width: 54px; }
.g4 { width: 73px; }
.g5 { width: 61px; }
.styles { width: 81px; padding: 3px 0 0 12px; overflow: hidden; display: flex; flex-direction: column; }
.styles button { display: flex; align-items: center; gap: 4px; height: 26px; white-space: nowrap; font-size: 11px; flex: none; }
.styles svg { width: 16px; height: 16px; }
.styles span { align-self: end; }
.xrib > .next { width: 13px; margin: 0; padding-top: 39px; border: solid #ccc; border-width: 0 1px; }
.xrib > .fold { flex: 1; border: 0; padding-top: 78px; }
.xrib > .fold > svg { width: 10px; height: 6px; }
.xform { display: flex; align-items: center; padding: 8px 8px 7px; }
.xform .pick { width: 102px; }
.xform select { padding-left: 7px; height: 23px; }
.dots { width: 20px; text-align: center; color: #777; }
.fx { display: flex; align-items: center; gap: 9px; width: 74px; height: 25px; padding-left: 6px; margin-right: 4px; background: #fff; border: 1px solid #ccc; border-radius: 4px; }
.fx em { font: italic 18px/20px "Liberation Serif", serif; }
.xform .fm { flex: 1; font-size: 13px; }
.fm input { padding-left: 11px; width: 100%; }
.xgrid { display: flex; height: 293px; overflow: hidden; border-bottom: 1px solid #aaa; }
.xgrid table { width: 431px; table-layout: fixed; align-self: start; font-size: 13px; line-height: 18px; color: #000; }
.xgrid .r { width: 26px; }
.xgrid .a { width: 151px; }
.xgrid .b { width: 64px; }
.xgrid th { font-weight: 400; color: #555; background: #f0f0f0; padding: 0; }
.xgrid thead th { height: 21px; border-right: 1px solid #ddd; border-bottom: 1px solid #aaa; }
.xgrid thead th:first-child { padding-left: 10px; }
.xgrid tbody th { border-right: 1px solid #aaa; border-bottom: 1px solid #ddd; }
.xgrid td { height: 20px; padding: 0 2px; background: #fff; border: solid #ddd; border-width: 0 1px 1px 0; }
.xgrid td:nth-child(3) { text-align: right; }
.xgrid .hot { background: #e1e1e1; color: #217346; }
.xgrid thead .hot { border-bottom: 2px solid #217346; }
.xgrid tbody .hot { border-right: 2px solid #217346; }
.xgrid .sel { outline: 2px solid #217346; outline-offset: -1px; }
.xvs { flex: 1; display: flex; flex-direction: column; align-items: center; padding: 5px 0; }
.xvs b { width: 9px; height: 169px; border-radius: 4px; background: #717171; margin: 4px 0 auto; }
.xsheets { display: flex; height: 28px; align-items: center; padding-left: 27px; background: #f5f5f5; }
.xsheets svg { margin-right: 23px; }
.xsheets .st { width: 65px; height: 24px; margin: -4px 33px 0 17px; background: #fff; color: #217346; font-weight: 700; border: solid #aaa; border-width: 0 1px; border-bottom: 2px solid #217346; }
.xsheets .dots { margin: 0 10px 0 25px; }
.xsheets .l { margin-right: 5px; }
.xsheets > b { width: 84px; height: 9px; border-radius: 5px; background: #717171; margin-right: 34px; }
.xstat { display: flex; align-items: center; flex: 1; border-top: 1px solid #e5e5e5; background: #f5f5f5; }
.xstat button { display: grid; place-items: center; width: 40px; height: 20px; }
.xstat .ds { display: flex; gap: 2px; width: 141px; padding-left: 23px; font-size: 11px; white-space: nowrap; }
.xstat .on { background: #ddd; border: 0; }
.zm { width: 20px; text-align: center; }
.xstat input { appearance: none; width: 100px; height: 12px; margin: 0 5px 0 -2px; background: linear-gradient(#777, #777) 0 6px / 100% 1px no-repeat; }
.xstat input::-webkit-slider-thumb { appearance: none; width: 5px; height: 12px; background: #555; }
.pc { margin-left: 12px; font-size: 11px; }

/* Numbered callouts */
.badge { position: absolute; width: 40px; height: 40px; border-radius: 50%; background: #da6446; color: #fff; font-size: 18px; line-height: 38px; text-align: center; box-shadow: 1px 2px 2px rgba(0, 0, 0, .3); }
.b1 { left: 240px; top: 269px; }
.b2 { left: 532px; top: 663px; }
.b3 { left: 1234px; top: 785px; }
.b4 { left: 636px; top: 246px; }
```
